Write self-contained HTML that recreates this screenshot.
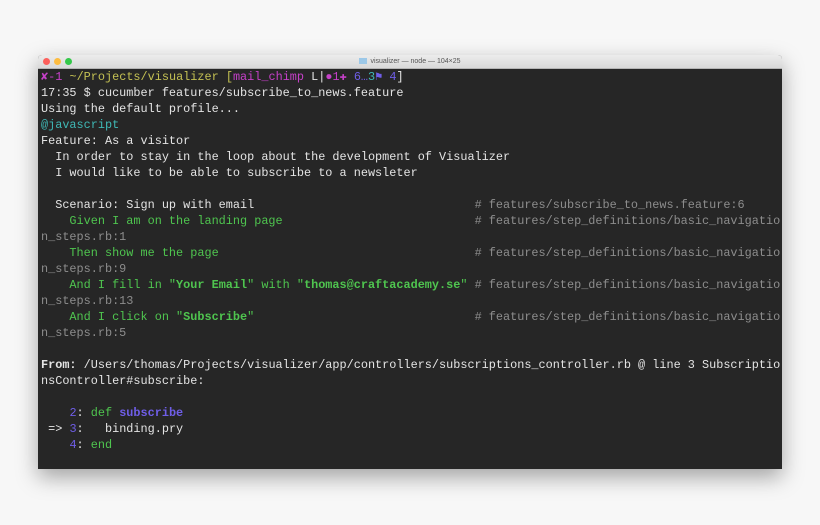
<!DOCTYPE html>
<html><head><meta charset="utf-8"><style>
html,body{margin:0;padding:0;width:820px;height:525px;background:#f7f7f7;overflow:hidden}
.win{position:absolute;left:38px;top:55px;width:744px;height:414px;background:#262626;box-shadow:0 8px 22px rgba(0,0,0,0.35);border-radius:4px 4px 0 0;overflow:hidden}
.tb{height:13px;background:linear-gradient(#ececec,#d9d9d9);border-bottom:1px solid #b5b5b5;position:relative}
.dot{position:absolute;top:3px;width:7px;height:7px;border-radius:50%}
.title{position:absolute;left:0;right:0;top:0;text-align:center;font:7px "Liberation Sans",sans-serif;color:#555;line-height:13px}
.title i{display:inline-block;width:8px;height:6px;background:#9cc8e8;margin-right:3px;vertical-align:-1px}
pre{margin:0;padding:0 0 0 3px;font-family:"Liberation Mono","DejaVu Sans Mono",monospace;font-size:11.85px;line-height:16px;color:#e4e4e4;white-space:pre}
.g{color:#4fc54f}.gr{color:#8d8d8d}.c{color:#3fb8b5}.p{color:#6f5ee8}.m{color:#c540c8}.y{color:#c4c153}.b{font-weight:bold}
</style></head><body>
<div class="win">
<div class="tb"><span class="dot" style="left:5px;background:#fc605c"></span><span class="dot" style="left:16px;background:#fdbc40"></span><span class="dot" style="left:27px;background:#34c84a"></span><div class="title"><i></i>visualizer — node — 104×25</div></div>
<pre><span class="m">✘</span><span class="m">-1</span> <span class="y">~/Projects/visualizer</span> <span class="y">[</span><span class="m">mail_chimp</span> L|<span class="m">●1✚</span> <span class="p">6…</span><span class="c">3</span><span class="p">⚑ 4</span>]
17:35 $ cucumber features/subscribe_to_news.feature
Using the default profile...
<span class="c">@javascript</span>
Feature: As a visitor
  In order to stay in the loop about the development of Visualizer
  I would like to be able to subscribe to a newsleter

  Scenario: Sign up with email                               <span class="gr"># features/subscribe_to_news.feature:6</span>
<span class="g">    Given I am on the landing page</span>                           <span class="gr"># features/step_definitions/basic_navigatio</span>
<span class="gr">n_steps.rb:1</span>
<span class="g">    Then show me the page</span>                                    <span class="gr"># features/step_definitions/basic_navigatio</span>
<span class="gr">n_steps.rb:9</span>
<span class="g">    And I fill in "<b>Your Email</b>" with "<b>thomas@craftacademy.se</b>"</span> <span class="gr"># features/step_definitions/basic_navigatio</span>
<span class="gr">n_steps.rb:13</span>
<span class="g">    And I click on "<b>Subscribe</b>"</span>                               <span class="gr"># features/step_definitions/basic_navigatio</span>
<span class="gr">n_steps.rb:5</span>

<b>From:</b> /Users/thomas/Projects/visualizer/app/controllers/subscriptions_controller.rb @ line 3 Subscriptio
nsController#subscribe:

    <span class="p">2</span>: <span class="g">def</span> <span class="p b">subscribe</span>
 =&gt; <span class="p">3</span>:   binding.pry
    <span class="p">4</span>: <span class="g">end</span>
</pre>
</div>
</body></html>
